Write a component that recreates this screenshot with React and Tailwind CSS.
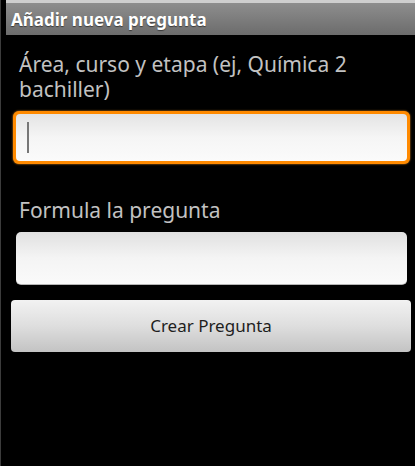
export default function App() {
  return (
    <div className="w-[415px] h-[466px] bg-black border-l border-[#3c3c3c] font-['Noto_Sans',sans-serif] overflow-hidden">
      {/* Barra de título */}
      <div className="pl-[5px]">
        <div className="h-[3px] bg-[#cfcfcf]" />
        <div className="h-[32px] bg-gradient-to-b from-[#8e8e8e] to-[#6c6c6c] flex items-center pl-[5px]">
          <span className="text-[17px] font-bold text-white leading-none [text-shadow:0_1px_1px_rgba(0,0,0,0.5)]">
            Añadir nueva pregunta
          </span>
        </div>
      </div>

      {/* Formulario */}
      <div className="pt-[17px] pl-[12px] pr-[5px]">
        <p className="pl-[6px] pr-[8px] text-[21px] leading-[25px] text-[#c2c2c2]">
          Área, curso y etapa (ej, Química 2 bachiller)
        </p>

        <div className="mt-[9px] h-[53px] rounded-[6px] bg-[#ff8a00] p-[3px] shadow-[0_0_2px_#ff9a20]">
          <div className="h-full rounded-[4px] bg-gradient-to-b from-[#e4e4e4] via-[#f5f5f5] to-[#fbfbfb] flex items-center pl-[11px]">
            <div className="w-[2px] h-[31px] bg-[#777]" />
          </div>
        </div>

        <p className="mt-[34px] pl-[6px] text-[21px] leading-[25px] text-[#c2c2c2]">
          Formula la pregunta
        </p>

        <div className="mt-[9px] mx-[3px] h-[53px] rounded-[5px] bg-gradient-to-b from-[#e0e0e0] via-[#f4f4f4] to-[#fafafa] border-b border-[#b5b5b5]" />

        <button className="mt-[15px] -ml-[2px] w-[400px] h-[52px] rounded-[4px] bg-gradient-to-b from-[#f2f2f2] via-[#dedede] to-[#c3c3c3] text-[#1e1e1e] text-[17px] flex items-center justify-center">
          Crear Pregunta
        </button>
      </div>
    </div>
  )
}
